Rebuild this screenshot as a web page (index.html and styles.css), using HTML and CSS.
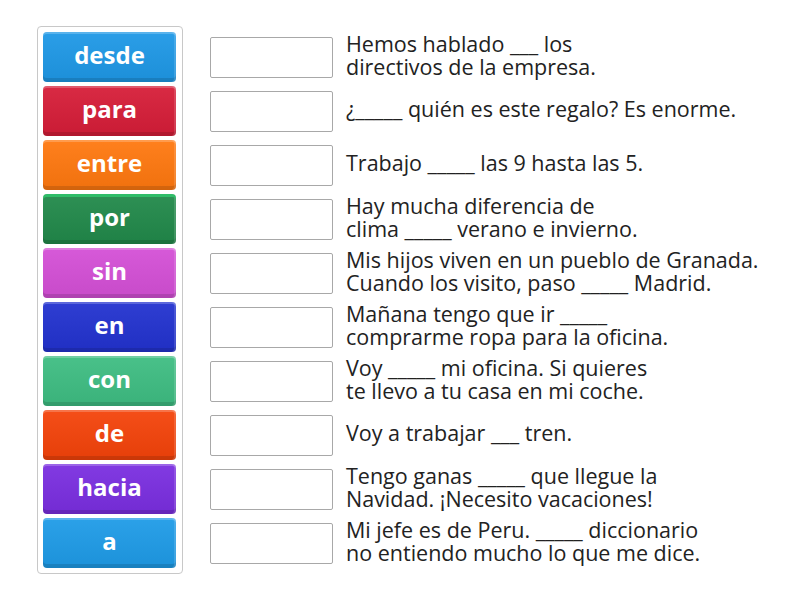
FILE: index.html
```html
<!DOCTYPE html>
<html lang="es">
<head>
<meta charset="utf-8">
<title>Emparejar preposiciones</title>
<link rel="stylesheet" href="styles.css">
</head>
<body>
<main class="game">
  <div class="bank">
    <div class="tile c-desde">desde</div>
    <div class="tile c-para">para</div>
    <div class="tile c-entre">entre</div>
    <div class="tile c-por">por</div>
    <div class="tile c-sin">sin</div>
    <div class="tile c-en">en</div>
    <div class="tile c-con">con</div>
    <div class="tile c-de">de</div>
    <div class="tile c-hacia">hacia</div>
    <div class="tile c-a">a</div>
  </div>
  <div class="rows">
    <div class="row"><div class="slot"></div><p class="text">Hemos hablado ___ los<br>directivos de la empresa.</p></div>
    <div class="row"><div class="slot"></div><p class="text">¿_____ quién es este regalo? Es enorme.</p></div>
    <div class="row"><div class="slot"></div><p class="text">Trabajo _____ las 9 hasta las 5.</p></div>
    <div class="row"><div class="slot"></div><p class="text">Hay mucha diferencia de<br>clima _____ verano e invierno.</p></div>
    <div class="row"><div class="slot"></div><p class="text">Mis hijos viven en un pueblo de Granada.<br>Cuando los visito, paso _____ Madrid.</p></div>
    <div class="row"><div class="slot"></div><p class="text">Mañana tengo que ir _____<br>comprarme ropa para la oficina.</p></div>
    <div class="row"><div class="slot"></div><p class="text">Voy _____ mi oficina. Si quieres<br>te llevo a tu casa en mi coche.</p></div>
    <div class="row"><div class="slot"></div><p class="text">Voy a trabajar ___ tren.</p></div>
    <div class="row"><div class="slot"></div><p class="text">Tengo ganas _____ que llegue la<br>Navidad. ¡Necesito vacaciones!</p></div>
    <div class="row"><div class="slot"></div><p class="text">Mi jefe es de Peru. _____ diccionario<br>no entiendo mucho lo que me dice.</p></div>
  </div>
</main>
</body>
</html>
```
FILE: styles.css
```css
* { box-sizing: border-box; }
html, body { margin: 0; background: #fff; }
body {
  font-family: "Open Sans", "Liberation Sans", sans-serif;
  width: 800px;
  height: 600px;
  overflow: hidden;
}
.game {
  display: flex;
  align-items: flex-start;
  gap: 27px;
  padding: 26px 0 0 37px;
}
.bank {
  display: flex;
  flex-direction: column;
  gap: 4px;
  padding: 5px 6px 5px 5px;
  border: 1px solid #c8c8c8;
  border-radius: 4px;
}
.tile {
  width: 133px;
  height: 50px;
  border-radius: 4px;
  color: #fff;
  font-weight: 700;
  font-size: 24px;
  line-height: 28px;
  display: flex;
  align-items: center;
  justify-content: center;
  padding-bottom: 5px;
  background: var(--c);
  box-shadow:
    inset 0 2px 0 rgba(255,255,255,0.22),
    inset -2px 0 0 rgba(255,255,255,0.14),
    inset 0 -4px 0 rgba(0,0,0,0.12);
  background-image: linear-gradient(rgba(255,255,255,0.06), rgba(0,0,0,0.06));
}
.c-desde { --c: #1e98e6; }
.c-para { --c: #d61d38; }
.c-entre { --c: #ff780f; }
.c-por { --c: #21894a; box-shadow: inset 0 3px 0 #2fbd68, inset -2px 0 0 rgba(255,255,255,0.14), inset 0 -4px 0 rgba(0,0,0,0.12); }
.c-sin { --c: #d44fd6; }
.c-en { --c: #2232cf; }
.c-con { --c: #3ebd82; }
.c-de { --c: #f4430a; }
.c-hacia { --c: #7a2ee0; }
.c-a { --c: #1e9be7; }
.rows {
  display: flex;
  flex-direction: column;
  gap: 4px;
  padding-top: 6px;
}
.row {
  height: 50px;
  display: flex;
  align-items: center;
  gap: 13px;
}
.slot {
  width: 123px;
  height: 41px;
  flex: none;
  border: 1px solid #a8a8a8;
  border-radius: 2px;
  background: #fff;
}
.text {
  margin: 0 0 5px;
  font-size: 21.5px;
  line-height: 23px;
  color: #222;
}
```
